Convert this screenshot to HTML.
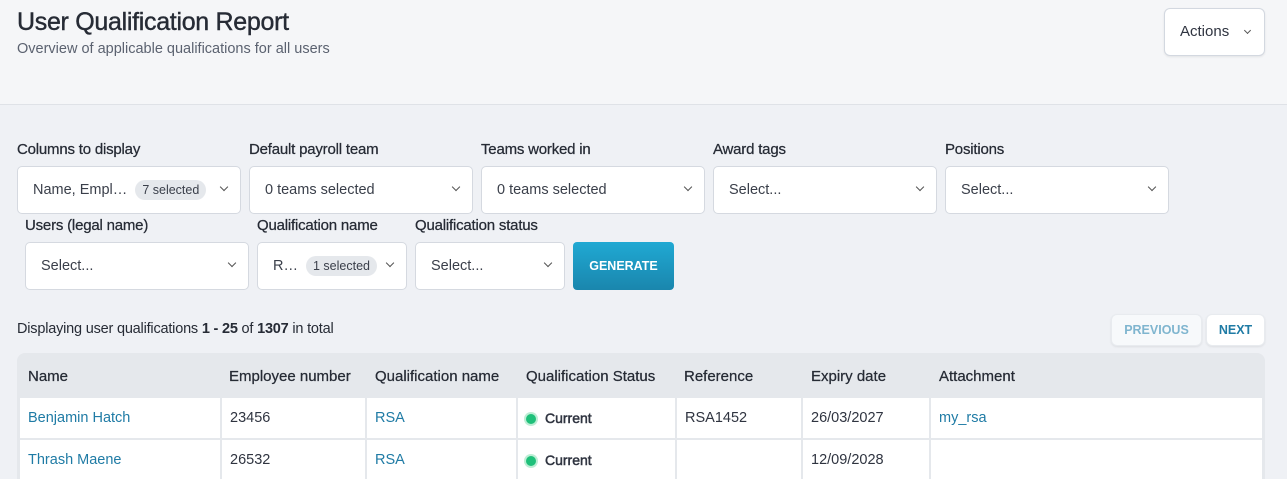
<!DOCTYPE html>
<html><head><style>
*{box-sizing:border-box;margin:0;padding:0}
html,body{width:1287px;height:479px;overflow:hidden}
body{background:#eff1f5;font-family:"Liberation Sans",sans-serif;color:#2f3440;position:relative}
.hdr{position:absolute;left:0;top:0;width:1287px;height:105px;background:#f5f6f8;border-bottom:1px solid #dfe2e7}
h1{position:absolute;left:17px;top:8px;font-size:25px;font-weight:normal;color:#262b35;letter-spacing:-0.3px;-webkit-text-stroke:0.4px #262b35}
.sub{position:absolute;left:17px;top:41px;font-size:14.5px;color:#5b6270}
.btn{position:absolute;background:#fff;border:1px solid #d3d8e0;border-radius:6px;box-shadow:0 1px 2px rgba(0,0,0,.08)}
.lbl{position:absolute;font-size:15px;color:#262b35;letter-spacing:-0.2px;-webkit-text-stroke:0.25px #262b35}
.plain{-webkit-text-stroke:0}
.sel{position:absolute;height:48px;background:#fff;border:1px solid #d5d9e0;border-radius:5px;font-size:14.5px;color:#3a3f4a;padding-left:15px;line-height:46px;white-space:nowrap}
.chev{position:absolute;right:13px;top:17px;width:6px;height:6px;border-right:1.2px solid #555;border-bottom:1.2px solid #555;transform:rotate(45deg)}
.pill{display:inline-block;background:#e5e8ec;border-radius:10px;font-size:12.5px;padding:0 7px;line-height:20px;color:#3a3f4a;margin-left:4px}
.gen{position:absolute;left:573px;top:242px;width:101px;height:48px;border-radius:4px;background:linear-gradient(#20a9d3,#1a86ad);color:#fff;font-size:12.5px;font-weight:bold;text-align:center;line-height:48px}
.tbl{position:absolute;left:17px;top:353px;width:1248px;height:140px;background:#e5e8ec;border-radius:8px}
.th{position:absolute;top:368px;font-size:15px;color:#262b35;-webkit-text-stroke:0.25px #262b35}
.cell{position:absolute;background:#fff;height:40px;font-size:14.5px;line-height:40px;padding-left:8px;color:#2f3440}
a{color:#1f7ba5;text-decoration:none}
.dot{display:inline-block;width:10px;height:10px;border-radius:50%;background:#1fc07a;box-shadow:0 0 0 2px #bdeed5;margin-right:9px;vertical-align:-1px}
.cur{font-size:14px;color:#2f3440;-webkit-text-stroke:0.5px #2f3440}
</style></head><body>
<div class="hdr"></div>
<h1>User Qualification Report</h1>
<div class="sub">Overview of applicable qualifications for all users</div>
<div class="btn" style="left:1164px;top:8px;width:101px;height:48px;font-size:15px;line-height:46px;padding-left:15px">Actions<span class="chev" style="top:19px;right:14px;width:5px;height:5px"></span></div>

<div class="lbl" style="left:17px;top:141px">Columns to display</div>
<div class="lbl" style="left:249px;top:141px">Default payroll team</div>
<div class="lbl" style="left:481px;top:141px">Teams worked in</div>
<div class="lbl" style="left:713px;top:141px">Award tags</div>
<div class="lbl" style="left:945px;top:141px">Positions</div>
<div class="sel" style="left:17px;top:166px;width:224px">Name, Empl… <span class="pill">7 selected</span><span class="chev"></span></div>
<div class="sel" style="left:249px;top:166px;width:224px">0 teams selected<span class="chev"></span></div>
<div class="sel" style="left:481px;top:166px;width:224px">0 teams selected<span class="chev"></span></div>
<div class="sel" style="left:713px;top:166px;width:224px">Select...<span class="chev"></span></div>
<div class="sel" style="left:945px;top:166px;width:224px">Select...<span class="chev"></span></div>

<div class="lbl" style="left:25px;top:217px">Users (legal name)</div>
<div class="lbl" style="left:257px;top:217px">Qualification name</div>
<div class="lbl" style="left:415px;top:217px">Qualification status</div>
<div class="sel" style="left:25px;top:242px;width:224px">Select...<span class="chev"></span></div>
<div class="sel" style="left:257px;top:242px;width:150px">R… <span class="pill">1 selected</span><span class="chev"></span></div>
<div class="sel" style="left:415px;top:242px;width:150px">Select...<span class="chev"></span></div>
<div class="gen">GENERATE</div>

<div class="lbl plain" style="left:17px;top:321px;font-size:14.5px">Displaying user qualifications <b>1 - 25</b> of <b>1307</b> in total</div>
<div class="btn" style="left:1111px;top:314px;width:91px;height:32px;background:#f7f9fb;border-color:#e8ebef;font-size:12.5px;font-weight:bold;color:#7fb5cf;text-align:center;line-height:30px">PREVIOUS</div>
<div class="btn" style="left:1206px;top:314px;width:59px;height:32px;border-color:#e8ebef;font-size:12.5px;font-weight:bold;color:#1f7ba5;text-align:center;line-height:30px">NEXT</div>

<div class="tbl"></div>
<div class="th" style="left:28px">Name</div>
<div class="th" style="left:229px">Employee number</div>
<div class="th" style="left:375px">Qualification name</div>
<div class="th" style="left:526px">Qualification Status</div>
<div class="th" style="left:684px">Reference</div>
<div class="th" style="left:811px">Expiry date</div>
<div class="th" style="left:939px">Attachment</div>

<div class="cell" style="left:20px;top:398px;width:200px;padding-left:8px"><a>Benjamin Hatch</a></div>
<div class="cell" style="left:222px;top:398px;width:143px">23456</div>
<div class="cell" style="left:367px;top:398px;width:149px"><a>RSA</a></div>
<div class="cell" style="left:518px;top:398px;width:157px"><span class="dot"></span><span class="cur">Current</span></div>
<div class="cell" style="left:677px;top:398px;width:124px">RSA1452</div>
<div class="cell" style="left:803px;top:398px;width:126px">26/03/2027</div>
<div class="cell" style="left:931px;top:398px;width:331px"><a>my_rsa</a></div>

<div class="cell" style="left:20px;top:440px;width:200px"><a>Thrash Maene</a></div>
<div class="cell" style="left:222px;top:440px;width:143px">26532</div>
<div class="cell" style="left:367px;top:440px;width:149px"><a>RSA</a></div>
<div class="cell" style="left:518px;top:440px;width:157px"><span class="dot"></span><span class="cur">Current</span></div>
<div class="cell" style="left:677px;top:440px;width:124px"></div>
<div class="cell" style="left:803px;top:440px;width:126px">12/09/2028</div>
<div class="cell" style="left:931px;top:440px;width:331px"></div>
</body></html>
